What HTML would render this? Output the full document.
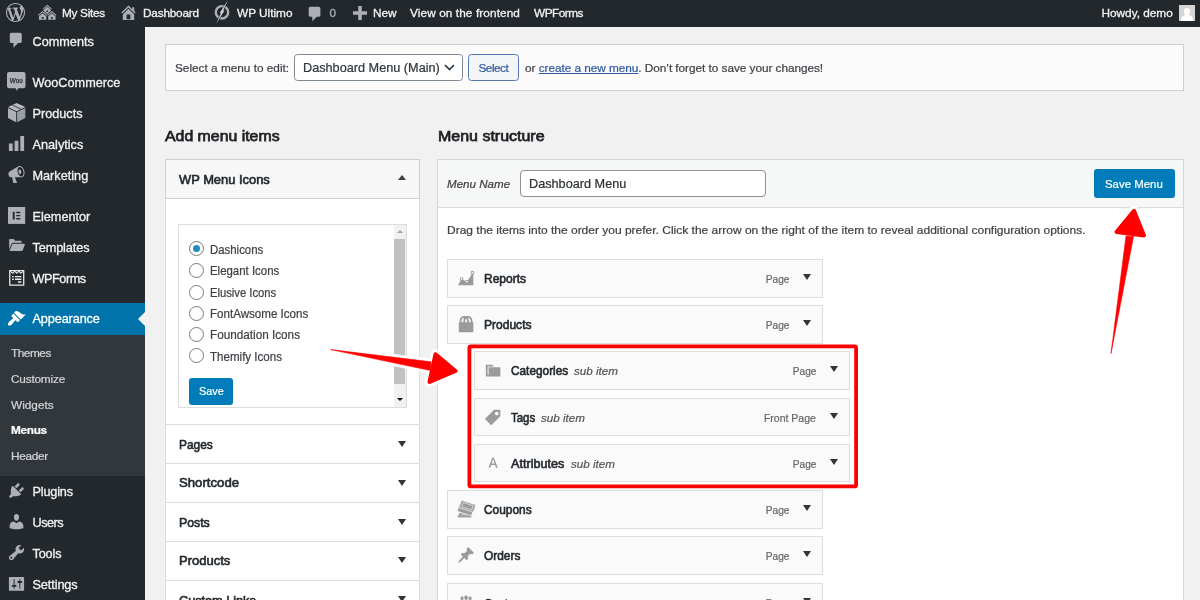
<!DOCTYPE html>
<html lang="en">
<head>
<meta charset="utf-8">
<title>Menus</title>
<style>
html,body{margin:0;padding:0}
body{width:1200px;height:600px;overflow:hidden;background:#f1f1f1;font-family:"Liberation Sans",sans-serif;font-size:11.8px;color:#3f3f45;position:relative}
*{box-sizing:border-box}
.a{position:absolute;white-space:nowrap}
span.a,.mitem b,.mitem i,.mitem u{-webkit-text-stroke:.22px;transform-origin:0 50%}
.mitem u{transform-origin:100% 50%}
svg{position:absolute;overflow:visible}
/* admin bar */
#bar{left:0;top:0;width:1200px;height:27px;background:#23282d}
.bt{color:#f2f2f2;-webkit-text-stroke:.3px !important;font-size:11.8px;line-height:27px;top:-.5px;height:27px}
/* sidebar */
#side{left:0;top:27px;width:145px;height:573px;background:#23282d}
.mi{left:32.5px;color:#f2f2f2;-webkit-text-stroke:.3px !important;font-size:12.7px;line-height:30px;height:30px}
.sm{left:11px;color:#d2d5d8;font-size:11.8px;line-height:24px;height:24px}
/* content */
.h2{font-size:15.3px;font-weight:normal;color:#1d2024;line-height:20px;margin-top:.3px;-webkit-text-stroke:.75px !important}
.acc{left:165px;width:254.5px;background:#fff;border:1px solid #dadcdf;border-top:0}
.acch{font-size:12.7px;font-weight:normal;color:#23282d;line-height:20px;left:178.700px;-webkit-text-stroke:.6px !important}
.rl{left:210.200px;font-size:12.2px;color:#3f3f45;line-height:20px;margin-top:.5px}
.radio{left:189px;width:15px;height:15px;border:1px solid #717b86;border-radius:50%;background:#fff}
.mitem{height:37.700px;width:375.500px;background:#fafafa;border:1px solid #ddd}
.mitem b{position:absolute;left:35.800px;top:0;line-height:38px;font-size:12px;color:#23282d;font-weight:normal;-webkit-text-stroke:.58px !important}
.mitem i{position:absolute;top:0;line-height:38px;font-size:11.8px;color:#555;font-style:italic}
.mitem u{position:absolute;right:32.500px;top:0;line-height:38px;font-size:10.9px;color:#666;text-decoration:none}
.mitem s{position:absolute;right:10.400px;top:14.300px;width:0;height:0;border:4.400px solid transparent;border-top:6.200px solid #30353a;border-bottom:0;text-decoration:none}
.mitem svg{left:9.200px;top:9.200px;width:18.200px;height:18.200px;fill:#9b9b9b}
.dn{width:0;height:0;border:4.100px solid transparent;border-top:6.200px solid #30353a;margin-top:-.8px;margin-left:.2px;border-bottom:0;left:398px}
</style>
</head>
<body>
<div id="root" class="a" style="left:0;top:0;width:1200px;height:600px;will-change:transform">
<!-- ADMIN BAR -->
<div id="bar" class="a">
<svg style="left:6px;top:3px;width:19px;height:19px" viewBox="0 0 20 20" fill="#adb1b5"><path d="M20 10c0-5.51-4.49-10-10-10C4.48 0 0 4.49 0 10c0 5.52 4.48 10 10 10 5.51 0 10-4.48 10-10zM7.78 15.37L4.37 6.22c.55-.02 1.17-.08 1.17-.08.5-.06.44-1.13-.06-1.11 0 0-1.45.11-2.37.11-.18 0-.37 0-.58-.01C4.12 2.69 6.87 1.11 10 1.11c2.33 0 4.45.87 6.05 2.34-.68-.11-1.65.39-1.65 1.58 0 .74.45 1.36.9 2.1.35.61.55 1.36.55 2.46 0 1.49-1.4 5-1.4 5l-3.03-8.37c.54-.02.82-.17.82-.17.5-.05.44-1.25-.06-1.22 0 0-1.44.12-2.38.12-.87 0-2.33-.12-2.33-.12-.5-.03-.56 1.2-.06 1.22l.92.08 1.26 3.41zM17.41 10c.24-.64.74-1.87.43-4.25.7 1.29 1.05 2.71 1.05 4.25 0 3.29-1.73 6.24-4.4 7.78.97-2.59 1.94-5.2 2.92-7.78zM6.100 18.09C3.12 16.65 1.11 13.53 1.11 10c0-1.3.23-2.48.72-3.59C3.25 10.3 4.67 14.2 6.1 18.09zm4.03-6.63l2.58 6.98c-.86.29-1.76.45-2.71.45-.79 0-1.57-.11-2.29-.33.81-2.38 1.62-4.74 2.42-7.100z"/></svg>
<svg style="left:38px;top:3.300px;width:18.500px;height:18.500px" viewBox="0 0 20 20" fill="#adb1b5"><path d="M14.27 6.87L10 3.14 5.73 6.87 5 6.14l5-4.38 5 4.38zM14 8.42l-4.05 3.43L6 8.38v-.74l4-3.5 4 3.5v.78zM11 9.7V8H9v1.700h2zm-1.730 4.03L5 10 .73 13.73 0 13l5-4.380L10 13zm10 0L15 10l-4.270 3.730L10 13l5-4.380L20 13zM5 11l4 3.500V18H1v-3.500zm10 0l4 3.500V18h-8v-3.500zm-9 6v-2H4v2h2zm10 0v-2h-2v2h2z"/></svg>
<span class="a bt" style="left:62px;letter-spacing:-.3px">My Sites</span>
<svg style="left:119px;top:3px;width:19px;height:19px" viewBox="0 0 20 20" fill="#adb1b5"><path d="M16 8.500l1.530 1.530-1.060 1.060L10 4.620l-6.470 6.470-1.060-1.060L10 2.500l4 4v-2h2v4zm-6-2.460l6 5.990V18H4v-5.970zM12 17v-5H8v5h4z"/></svg>
<span class="a bt" style="left:143px;letter-spacing:-.2px">Dashboard</span>
<svg style="left:213px;top:0;width:18px;height:24px" viewBox="0 0 18 24"><circle cx="9" cy="12.300" r="6.200" fill="none" stroke="#adb1b5" stroke-width="2.400"/><path d="M15 0L6.700 13.100H7.900L3.200 23.800 11.500 10.500H10.300Z" fill="#cfd2d5" stroke="#23282d" stroke-width="1.100" paint-order="stroke"/></svg>
<span class="a bt" style="left:237px">WP Ultimo</span>
<svg style="left:305.500px;top:4.500px;width:18px;height:18px" viewBox="0 0 20 20" fill="#adb1b5"><path d="M5 2h9c1.100 0 2 .9 2 2v7c0 1.100-.9 2-2 2h-2l-5 5v-5H5c-1.100 0-2-.9-2-2V4c0-1.100.9-2 2-2z"/></svg>
<span class="a bt" style="left:329.500px;color:#adb1b5">0</span>
<svg style="left:352.500px;top:5.700px;width:14px;height:14px" viewBox="0 0 14 14" fill="#adb1b5"><path d="M5.200 0h3.600v5.200H14v3.600H8.800V14H5.200V8.800H0V5.200h5.200z"/></svg>
<span class="a bt" style="left:373px">New</span>
<span class="a bt" style="left:410px;letter-spacing:.1px">View on the frontend</span>
<span class="a bt" style="left:534px;letter-spacing:-.5px">WPForms</span>
<span class="a bt" style="left:1101.500px">Howdy, demo</span>
<div class="a" style="left:1179px;top:5px;width:16px;height:16px;background:#d5d5d5;overflow:hidden"><div class="a" style="left:5px;top:2.500px;width:6px;height:7px;border-radius:50%;background:#fff"></div><div class="a" style="left:2px;top:10px;width:12px;height:10px;border-radius:5px 5px 0 0;background:#fff"></div></div>
</div>
<!-- SIDEBAR -->
<div id="side" class="a"></div>
<div class="a" style="left:0;top:303px;width:145px;height:31.500px;background:#0073aa"></div>
<div class="a" style="left:0;top:334.500px;width:145px;height:141.500px;background:#32373c"></div>
<div class="a" style="left:137.800px;top:311.500px;width:0;height:0;border:7.500px solid transparent;border-right:7.200px solid #f1f1f1;border-left:0"></div>
<!-- sidebar icons -->
<svg style="left:7.200px;top:30.800px;width:18.500px;height:18.500px" viewBox="0 0 20 20" fill="#adb1b5"><path d="M5 2h9c1.100 0 2 .9 2 2v7c0 1.100-.9 2-2 2h-2l-5 5v-5H5c-1.100 0-2-.9-2-2V4c0-1.100.9-2 2-2z"/></svg>
<svg style="left:7px;top:71.500px;width:18.500px;height:19px" viewBox="0 0 18.500 19"><path d="M2 0h14.500a2 2 0 0 1 2 2v12.300a2 2 0 0 1-2 2H11.300l-1.500 2.400-1.200-2.400H2a2 2 0 0 1-2-2V2a2 2 0 0 1 2-2z" fill="#adb1b5"/><text x="9.250" y="10.700" font-family="Liberation Sans, sans-serif" font-size="7.200" text-anchor="middle" fill="#23282d" stroke="#23282d" stroke-width=".25" textLength="13" lengthAdjust="spacingAndGlyphs">Woo</text></svg>
<svg style="left:7.750px;top:102.700px;width:17.300px;height:19.300px" viewBox="0 0 17.300 19.300"><path d="M8.650 0L17.300 4 8.650 8.300 0 4z" fill="#b9bdc1"/><path d="M4.300 2L13 6.100" stroke="#5b6167" stroke-width="1.300" fill="none"/><path d="M0 5l8.200 4.100v10.200L0 15z" fill="#adb1b5"/><path d="M17.300 5l-8.200 4.100v10.200l8.200-4.300z" fill="#9a9fa4"/></svg>
<svg style="left:6.850px;top:133.700px;width:19px;height:19px" viewBox="0 0 20 20" fill="#adb1b5"><path d="M18 18V2h-4v16h4zm-6 0V7H8v11h4zm-6 0v-8H2v8h4z"/></svg>
<svg style="left:6.500px;top:164.500px;width:19px;height:19px" viewBox="0 0 20 20" fill="#adb1b5"><path d="M18.150 5.940c.46 1.620.38 3.220-.02 4.480-.42 1.280-1.260 2.180-2.300 2.480-.16.06-.26.06-.4.060-.06.02-.12.02-.18.020-.06.02-.14.020-.22.020h-6.800l2.220 5.500c.02.140-.06.260-.14.340-.08.100-.24.160-.34.160H6.950c-.1 0-.26-.06-.34-.16-.08-.08-.16-.2-.14-.34l-1-5.500H4.250l-.02-.02c-.5.060-1.080-.18-1.540-.62s-.88-1.080-1.060-1.880c-.24-.8-.2-1.560-.02-2.200.18-.62.580-1.080 1.060-1.300l.02-.02 9-5.400c.1-.06.18-.1.240-.16.060-.04.140-.08.240-.12.160-.08.280-.12.500-.18 1.040-.3 2.240.1 3.220.98s1.840 2.240 2.260 3.860zm-2.580 5.980h-.02c.4-.1.740-.34 1.040-.7.580-.7.860-1.760.86-3.040 0-.64-.1-1.300-.28-1.980-.34-1.360-1.020-2.500-1.780-3.240s-1.680-1.100-2.460-.88c-.82.220-1.400.96-1.700 2-.32 1.040-.28 2.360.06 3.720.38 1.360 1 2.500 1.800 3.240.78.740 1.620 1.100 2.480.88zm-2.540-7.080c.22-.04.42-.02.620.04.380.16.760.48 1.020 1s.42 1.200.42 1.780c0 .3-.04.560-.12.800-.18.480-.44.840-.86.940-.34.100-.8-.06-1.140-.4s-.64-.86-.78-1.500c-.18-.62-.12-1.240.02-1.720s.48-.84.820-.94z"/></svg>
<svg style="left:7.750px;top:206.900px;width:17.200px;height:16.900px" viewBox="0 0 17.200 16.900"><rect width="17.200" height="16.900" fill="#adb1b5"/><path d="M4.750 4.800h1.900v7.600H4.750zM8.250 4.800h4v1.400h-4zM8.250 7.900h4v1.400h-4zM8.250 11h4v1.400h-4z" fill="#23282d"/></svg>
<svg style="left:8.500px;top:239.300px;width:16px;height:12px" viewBox="0 0 17 13" fill="#adb1b5"><path d="M0 1.200C0 .5.500 0 1.200 0h3.600l1.700 1.800h5.800c.7 0 1.200.5 1.200 1.200v1H4.300c-.8 0-1.400.4-1.700 1.100L0 11z"/><path d="M4.300 5.200h12c.6 0 .9.500.7 1l-2.300 5.900c-.2.500-.7.900-1.300.9H1.200c-.5 0-.8-.4-.6-.9l2.500-6c.2-.5.700-.9 1.200-.9z"/></svg>
<svg style="left:9px;top:270px;width:15.500px;height:15.700px" viewBox="0 0 16.500 17" fill="none" stroke="#e8e8e8"><path d="M.7.700h15.100v15.600H.7z" stroke-width="1.400"/><path d="M1 1.200l3 2.400 2-2.400 2.250 2.400 2.250-2.400 2 2.400 3-2.400" stroke-width="1.100"/><path d="M3.200 7.200h1.800M6.300 7.200h7M3.200 10h1.800M6.300 10h7M9.500 13h3.800" stroke-width="1.500"/></svg>
<svg style="left:7px;top:309px;width:19px;height:19px" viewBox="0 0 20 20" fill="#fff"><path d="M14.480 11.060L7.410 3.990l1.500-1.500c.5-.56 2.300-.47 3.510.32 1.210.8 1.430 1.280 2.910 2.100 1.180.64 2.450 1.260 4.450.85zm-.71.710L6.700 4.700 4.930 6.470c-.39.39-.39 1.020 0 1.410l1.060 1.060c.39.39.39 1.030 0 1.420-.6.600-1.430 1.110-2.210 1.690-.35.260-.7.530-1.010.84C1.430 14.230.4 16.080 1.400 17.070c.99 1 2.840-.03 4.180-1.360.31-.31.580-.66.850-1.020.57-.78 1.080-1.610 1.690-2.210.39-.39 1.020-.39 1.410 0l1.060 1.060c.39.39 1.020.39 1.410 0z"/></svg>
<svg style="left:7px;top:480.700px;width:19px;height:19px" viewBox="0 0 20 20" fill="#adb1b5"><path d="M13.110 4.360L9.870 7.600 8 5.730l3.240-3.240c.35-.34 1.050-.2 1.560.32.520.51.660 1.210.31 1.550zm-8 1.770l.91-1.120 9.010 9.010-1.190.84c-.71.710-2.630 1.160-3.820 1.160H6.140L4.900 17.260c-.59.590-1.540.59-2.120 0-.59-.58-.59-1.530 0-2.120l1.240-1.240v-3.880c0-1.130.4-3.190 1.090-3.890zm7.260 3.970l3.240-3.240c.34-.35 1.040-.21 1.550.31.520.51.660 1.210.31 1.550l-3.240 3.250z"/></svg>
<svg style="left:7px;top:512.200px;width:19px;height:19px" viewBox="0 0 20 20" fill="#adb1b5"><path d="M10 9.250c-2.270 0-2.730-3.440-2.730-3.440C7 4.020 7.820 2 9.970 2c2.160 0 2.980 2.020 2.710 3.810 0 0-.41 3.440-2.680 3.440zm0 2.570L12.720 10c2.390 0 4.520 2.330 4.520 4.530v2.490s-3.650 1.130-7.240 1.130c-3.650 0-7.240-1.130-7.240-1.130v-2.490c0-2.250 1.940-4.480 4.470-4.480z"/></svg>
<svg style="left:7px;top:543.200px;width:19px;height:19px" viewBox="0 0 20 20" fill="#adb1b5"><path d="M16.680 9.770c-1.340 1.340-3.300 1.670-4.950.99l-5.410 6.520c-.99.990-2.590.99-3.580 0s-.99-2.590 0-3.570l6.520-5.420c-.68-1.650-.35-3.610.99-4.950 1.280-1.280 3.120-1.620 4.720-1.060l-2.890 2.890 2.820 2.820 2.860-2.870c.53 1.580.18 3.390-1.080 4.650zM3.810 16.210c.4.390 1.040.39 1.430 0 .4-.4.400-1.040 0-1.430-.39-.4-1.030-.4-1.430 0-.39.390-.39 1.030 0 1.430z"/></svg>
<svg style="left:7.200px;top:574px;width:19px;height:19.800px" preserveAspectRatio="none" viewBox="0 0 20 20" fill="#adb1b5"><path d="M18 16V4c0-.55-.45-1-1-1H3c-.55 0-1 .45-1 1v12c0 .55.45 1 1 1h14c.55 0 1-.45 1-1zM8 11h1c.55 0 1 .45 1 1s-.45 1-1 1H8v1.500c0 .28-.22.500-.5.500s-.5-.22-.5-.5V13H6c-.55 0-1-.45-1-1s.45-1 1-1h1V5.500c0-.28.220-.5.500-.5s.5.220.5.500V11zm5-2h-1c-.55 0-1-.45-1-1s.45-1 1-1h1V5.500c0-.28.220-.5.500-.5s.5.220.5.500V7h1c.55 0 1 .45 1 1s-.45 1-1 1h-1v5.500c0 .28-.22.500-.5.500s-.5-.22-.5-.5V9z"/></svg>
<!-- sidebar labels -->
<span class="a mi" style="top:27px">Comments</span>
<span class="a mi" style="top:68px">WooCommerce</span>
<span class="a mi" style="top:98.700px">Products</span>
<span class="a mi" style="top:129.500px">Analytics</span>
<span class="a mi" style="top:160.500px">Marketing</span>
<span class="a mi" style="top:202px">Elementor</span>
<span class="a mi" style="top:232.500px;letter-spacing:-.1px">Templates</span>
<span class="a mi" style="top:263.700px;letter-spacing:-.45px">WPForms</span>
<span class="a mi" style="top:304.300px;color:#fff;letter-spacing:-.12px">Appearance</span>
<span class="a sm" style="top:341.400px;letter-spacing:-.45px">Themes</span>
<span class="a sm" style="top:367px;letter-spacing:-.19px">Customize</span>
<span class="a sm" style="top:393px">Widgets</span>
<span class="a sm" style="top:418px;color:#fff;font-weight:bold;letter-spacing:-.3px">Menus</span>
<span class="a sm" style="top:443.500px;letter-spacing:-.3px">Header</span>
<span class="a mi" style="top:476.700px;letter-spacing:-.17px">Plugins</span>
<span class="a mi" style="top:508px;letter-spacing:-.5px">Users</span>
<span class="a mi" style="top:538.700px;letter-spacing:-.15px">Tools</span>
<span class="a mi" style="top:570px;letter-spacing:-.1px">Settings</span>
<!-- MANAGE MENUS BAR -->
<div class="a" style="left:165px;top:43.500px;width:1018.500px;height:47.500px;background:#fbfbfb;border:1px solid #ccd0d4"></div>
<span class="a" style="left:175px;top:57.700px;line-height:20px;color:#3f3f45">Select a menu to edit:</span>
<div class="a" style="left:294px;top:53.500px;width:168.500px;height:27.300px;background:#fff;border:1px solid #7e8993;border-radius:3.500px"></div>
<span class="a" style="left:303px;top:57.500px;line-height:20px;font-size:12.700px;color:#32373c">Dashboard Menu (Main)</span>
<svg style="left:444px;top:64px;width:11px;height:7px" viewBox="0 0 11 7" fill="none" stroke="#32373c" stroke-width="1.700"><path d="M1 1l4.500 4.500L10 1"/></svg>
<div class="a" style="left:468.200px;top:53.500px;width:51px;height:27.300px;background:#f3f5f6;border:1px solid #5a77b5;border-radius:3.500px"></div>
<span class="a" style="left:478.500px;top:57.700px;line-height:20px;color:#33589f;letter-spacing:-.5px">Select</span>
<span class="a" style="left:525px;top:57.700px;line-height:20px;color:#3f3f45;letter-spacing:-.04px">or <span style="color:#33589f;text-decoration:underline">create a new menu</span>. Don’t forget to save your changes!</span>
<!-- HEADINGS -->
<span class="a h2" style="left:165px;top:126px;transform:scaleX(1.0366)">Add menu items</span>
<span class="a h2" style="left:437.500px;top:126px;transform:scaleX(1.0446)">Menu structure</span>
<!-- ACCORDION -->
<div class="a" style="left:165px;top:159px;width:254.500px;height:40px;background:#f7f7f7;border:1px solid #ccd0d4"></div>
<span class="a acch" style="top:169.500px;transform:scaleX(1.0166)">WP Menu Icons</span>
<div class="a" style="left:398px;top:175.800px;width:0;height:0;border:4px solid transparent;border-bottom:5.800px solid #3a4046;border-top:0;margin-left:.3px;margin-top:-.4px"></div>
<div class="a acc" style="top:199px;height:226px"></div>
<div class="a" style="left:178px;top:224px;width:229px;height:183.500px;background:#fff;border:1px solid #dcdcde"></div>
<!-- scrollbar -->
<div class="a" style="left:393.500px;top:225px;width:12.500px;height:181.500px;background:#f1f1f1"></div>
<div class="a" style="left:394.200px;top:239.300px;width:11px;height:144.500px;background:#c1c1c1"></div>
<div class="a" style="left:397px;top:230px;width:0;height:0;border:3px solid transparent;border-bottom:3.500px solid #a3a3a3;border-top:0"></div>
<div class="a" style="left:397px;top:398px;width:0;height:0;border:3px solid transparent;border-top:3.500px solid #000;border-bottom:0"></div>
<!-- radios -->
<div class="a radio" style="top:241px"><div class="a" style="left:3px;top:3px;width:7px;height:7px;border-radius:50%;background:#1e8cbe"></div></div>
<div class="a radio" style="top:263px"></div>
<div class="a radio" style="top:284.500px"></div>
<div class="a radio" style="top:306px"></div>
<div class="a radio" style="top:327px"></div>
<div class="a radio" style="top:348px"></div>
<span class="a rl" style="top:239px;transform:scaleX(0.9357)">Dashicons</span>
<span class="a rl" style="top:260.500px;transform:scaleX(0.9376)">Elegant Icons</span>
<span class="a rl" style="top:282px;transform:scaleX(0.9224)">Elusive Icons</span>
<span class="a rl" style="top:303.500px;transform:scaleX(0.9501)">FontAwsome Icons</span>
<span class="a rl" style="top:324.500px;transform:scaleX(0.9626)">Foundation Icons</span>
<span class="a rl" style="top:346px;transform:scaleX(0.9492)">Themify Icons</span>
<div class="a" style="left:189px;top:378px;width:44px;height:26.700px;background:#007cba;border-radius:3px"></div>
<span class="a" style="left:199px;top:381.300px;line-height:20px;color:#fff;font-size:11.800px;transform:scaleX(0.9199)">Save</span>
<!-- closed sections -->
<div class="a acc" style="top:425px;height:39px"></div>
<div class="a acc" style="top:464px;height:39px"></div>
<div class="a acc" style="top:503px;height:39px"></div>
<div class="a acc" style="top:542px;height:39px"></div>
<div class="a acc" style="top:581px;height:39px"></div>
<span class="a acch" style="top:434.500px;transform:scaleX(0.9379)">Pages</span>
<span class="a acch" style="top:473px;transform:scaleX(1.0387)">Shortcode</span>
<span class="a acch" style="top:512.500px;transform:scaleX(0.9698)">Posts</span>
<span class="a acch" style="top:551px;transform:scaleX(1.0248)">Products</span>
<span class="a acch" style="top:590.600px;transform:scaleX(0.9992)">Custom Links</span>
<div class="a dn" style="top:442px"></div>
<div class="a dn" style="top:480.500px"></div>
<div class="a dn" style="top:519.500px"></div>
<div class="a dn" style="top:558px"></div>
<div class="a dn" style="top:597px"></div>
<!-- MENU STRUCTURE PANEL -->
<div class="a" style="left:437px;top:159px;width:746.500px;height:460px;background:#fff;border:1px solid #d3d6da"></div>
<div class="a" style="left:438px;top:160px;width:744.500px;height:48px;background:#f6f7f7;border-bottom:1px solid #dcdcde"></div>
<span class="a" style="left:447px;top:173.500px;line-height:20px;font-style:italic;color:#3f3f45;transform:scaleX(0.9832)">Menu Name</span>
<div class="a" style="left:520px;top:170px;width:245.500px;height:27px;background:#fff;border:1px solid #8c8f94;border-radius:4px"></div>
<span class="a" style="left:529px;top:173.500px;line-height:20px;font-size:12.700px;color:#2c3338">Dashboard Menu</span>
<div class="a" style="left:1093.700px;top:169.200px;width:81.300px;height:29px;background:#007cba;border-radius:3px"></div>
<span class="a" style="left:1105px;top:174px;line-height:20px;color:#fff;transform:scaleX(0.9679)">Save Menu</span>
<span class="a" style="left:447px;top:219.500px;line-height:20px;color:#3f3f45;transform:scaleX(1.0164)">Drag the items into the order you prefer. Click the arrow on the right of the item to reveal additional configuration options.</span>
<!-- items -->
<div class="a mitem" style="left:447px;top:259px;height:39px"><svg viewBox="0 0 20 20"><path d="M18 18l.01-12.280c.59-.35.99-.99.99-1.720 0-1.100-.9-2-2-2s-2 .9-2 2c0 .8.47 1.480 1.140 1.800l-4.130 6.580c-.33-.24-.73-.38-1.160-.38-.84 0-1.550.51-1.850 1.240l-2.140-1.530c.09-.22.140-.46.140-.71 0-1.110-.89-2-2-2-1.100 0-2 .89-2 2 0 .73.4 1.360.98 1.710L1 18h17zM17 3c.55 0 1 .45 1 1s-.45 1-1 1-1-.45-1-1 .45-1 1-1zM5 10c.55 0 1 .45 1 1s-.45 1-1 1-1-.45-1-1 .45-1 1-1zm5.850 3c.55 0 1 .45 1 1s-.45 1-1 1-1-.45-1-1 .45-1 1-1z"/></svg><b style="transform:scaleX(1.0017)">Reports</b><u style="transform:scaleX(0.9295)">Page</u><s></s></div>
<div class="a mitem" style="left:447px;top:305px;height:39px"><svg viewBox="0 0 20 20"><path d="M17 8h1v11H2V8h1V6c0-2.760 2.240-5 5-5 .71 0 1.390.15 2 .42.61-.27 1.290-.42 2-.42 2.760 0 5 2.240 5 5v2zM5 6v2h2V6c0-1.130.39-2.160 1.020-3H8C6.350 3 5 4.340 5 6zm10 2V6c0-1.650-1.350-3-3-3h-.02c.63.84 1.020 1.870 1.020 3v2h2zm-5-4.220C9.390 4.330 9 5.120 9 6v2h2V6c0-.88-.39-1.670-1-2.220z"/></svg><b style="transform:scaleX(1.003)">Products</b><u style="transform:scaleX(0.9295)">Page</u><s></s></div>
<div class="a mitem" style="left:474px;top:351px;height:39px"><svg viewBox="0 0 20 20"><path d="M5 7h13v10H2V4h7l2 2H4v9h1V7z"/></svg><b style="transform:scaleX(0.9855)">Categories</b><i style="left:98.800px;transform:scaleX(0.9864)">sub item</i><u style="transform:scaleX(0.9295)">Page</u><s></s></div>
<div class="a mitem" style="left:474px;top:398px;height:38px"><svg viewBox="0 0 20 20"><path d="M11 2h7v7L8 19l-7-7zm3 6c1.100 0 2-.9 2-2s-.9-2-2-2-2 .9-2 2 .9 2 2 2z"/></svg><b style="transform:scaleX(0.9528)">Tags</b><i style="left:65.800px;transform:scaleX(0.9864)">sub item</i><u style="transform:scaleX(0.9644)">Front Page</u><s></s></div>
<div class="a mitem" style="left:474px;top:444px;height:38px"><svg viewBox="0 0 20 20"><path d="M13.230 15h1.900L11 4H9L5 15h1.880l1.070-3h4.180zm-1.530-4.540H8.510L10 5.600z"/></svg><b style="transform:scaleX(1.052)">Attributes</b><i style="left:95.800px;transform:scaleX(0.9864)">sub item</i><u style="transform:scaleX(0.9295)">Page</u><s></s></div>
<div class="a mitem" style="left:447px;top:490px;height:39px"><svg viewBox="0 0 20 20"><g stroke="#fafafa" stroke-width=".7"><path d="M2.500 14h12l2 5.500h-16.500z"/><path d="M4.500 16.300h8" stroke-width=".7" fill="none"/><g transform="rotate(18 10 10.500)"><rect x="1.200" y="6.800" width="16.500" height="8.500"/></g><g transform="rotate(18 11.500 6.800)"><rect x="3.200" y="2.600" width="16.500" height="8.500"/><rect x="5.700" y="4.400" width="11.500" height="4.900" fill="none" stroke-width=".75" stroke="#e4e4e4"/></g></g></svg><b style="transform:scaleX(0.9905)">Coupons</b><u style="transform:scaleX(0.9295)">Page</u><s></s></div>
<div class="a mitem" style="left:447px;top:536px;height:39px"><svg viewBox="0 0 20 20"><path d="M10.440 3.020l1.820-1.820 6.360 6.350-1.830 1.820c-1.050-.68-2.480-.57-3.410.36l-.75.750c-.92.930-1.040 2.350-.35 3.410l-1.830 1.820-2.410-2.410-2.800 2.790c-.42.420-3.380 2.710-3.800 2.290s1.860-3.390 2.280-3.810l2.790-2.790L4.100 9.360l1.830-1.820c1.050.69 2.480.57 3.400-.36l.75-.75c.93-.92 1.050-2.350.36-3.410z"/></svg><b style="transform:scaleX(0.992)">Orders</b><u style="transform:scaleX(0.9295)">Page</u><s></s></div>
<div class="a mitem" style="left:447px;top:583px;height:39px"><svg viewBox="0 0 20 20"><path d="M8.030 4.460c-.29 1.280.55 3.460 1.970 3.460 1.410 0 2.250-2.180 1.960-3.460-.22-.98-1.080-1.630-1.960-1.630-.89 0-1.740.65-1.970 1.630zm-4.130.9c-.25 1.080.47 2.930 1.670 2.930s1.920-1.850 1.670-2.930c-.19-.83-.92-1.390-1.670-1.390s-1.480.56-1.670 1.390zm8.860 0c-.25 1.080.47 2.930 1.660 2.930 1.200 0 1.920-1.850 1.670-2.930-.19-.83-.92-1.390-1.670-1.390-.74 0-1.470.56-1.660 1.390zm-.59 11.430l1.250-4.300C14.200 10 12.710 8.470 10 8.470c-2.720 0-4.210 1.530-3.440 4.020l1.260 4.300C8.050 17.510 9 18 10 18c.98 0 1.940-.49 2.170-1.210zm-6.100-7.630c-.49.67-.96 1.830-.42 3.590l1.120 3.790c-.34.2-.77.310-1.200.31-.85 0-1.650-.41-1.850-1.030l-1.070-3.650c-.65-2.110.61-3.400 2.920-3.400.27 0 .54.02.79.06-.1.100-.2.220-.29.330zm8.350-.39c2.310 0 3.580 1.290 2.920 3.400l-1.070 3.650c-.2.620-1 1.030-1.850 1.030-.43 0-.86-.11-1.200-.31l1.110-3.770c.55-1.780.08-2.940-.42-3.610-.08-.11-.18-.23-.28-.33.250-.04.51-.06.79-.06z"/></svg><b style="top:.8px;transform:scaleX(0.97)">Customers</b><u style="transform:scaleX(0.9295)">Page</u><s></s></div>
<!-- RED BOX -->
<svg style="left:0;top:0;width:1200px;height:600px" viewBox="0 0 1200 600"><rect x="469.400" y="346.400" width="386.700" height="140" rx="1.500" fill="none" stroke="#fd0000" stroke-width="3.800"/></svg>
<!-- ARROWS -->
<svg style="left:0;top:0;width:1200px;height:600px" viewBox="0 0 1200 600">
<g stroke="#fff" stroke-width="6.500" stroke-linejoin="round" fill="#fff" opacity=".95">
<path d="M330.700 349.600L431 361.800 430.500 370.500Z"/>
<path d="M435.500 354.200L455.500 371 429.500 382Z" stroke-width="10"/>
<path d="M1111 353.500L1126 236 1133.500 236.500Z"/>
<path d="M1134 210.800L1144 235.500 1116.500 232Z" stroke-width="10"/>
</g>
<g stroke="#fe0000" stroke-linejoin="round" fill="#fe0000">
<path d="M330.700 349.600L431 361.800 430.500 370.500Z" stroke-width=".6"/>
<path d="M435.500 354.200L455.500 371 429.500 382Z" stroke-width="4"/>
<path d="M1111 353.500L1126 236 1133.500 236.500Z" stroke-width=".6"/>
<path d="M1134 210.800L1144 235.500 1116.500 232Z" stroke-width="4"/>
</g>
</svg>
</div>
</body>
</html>
